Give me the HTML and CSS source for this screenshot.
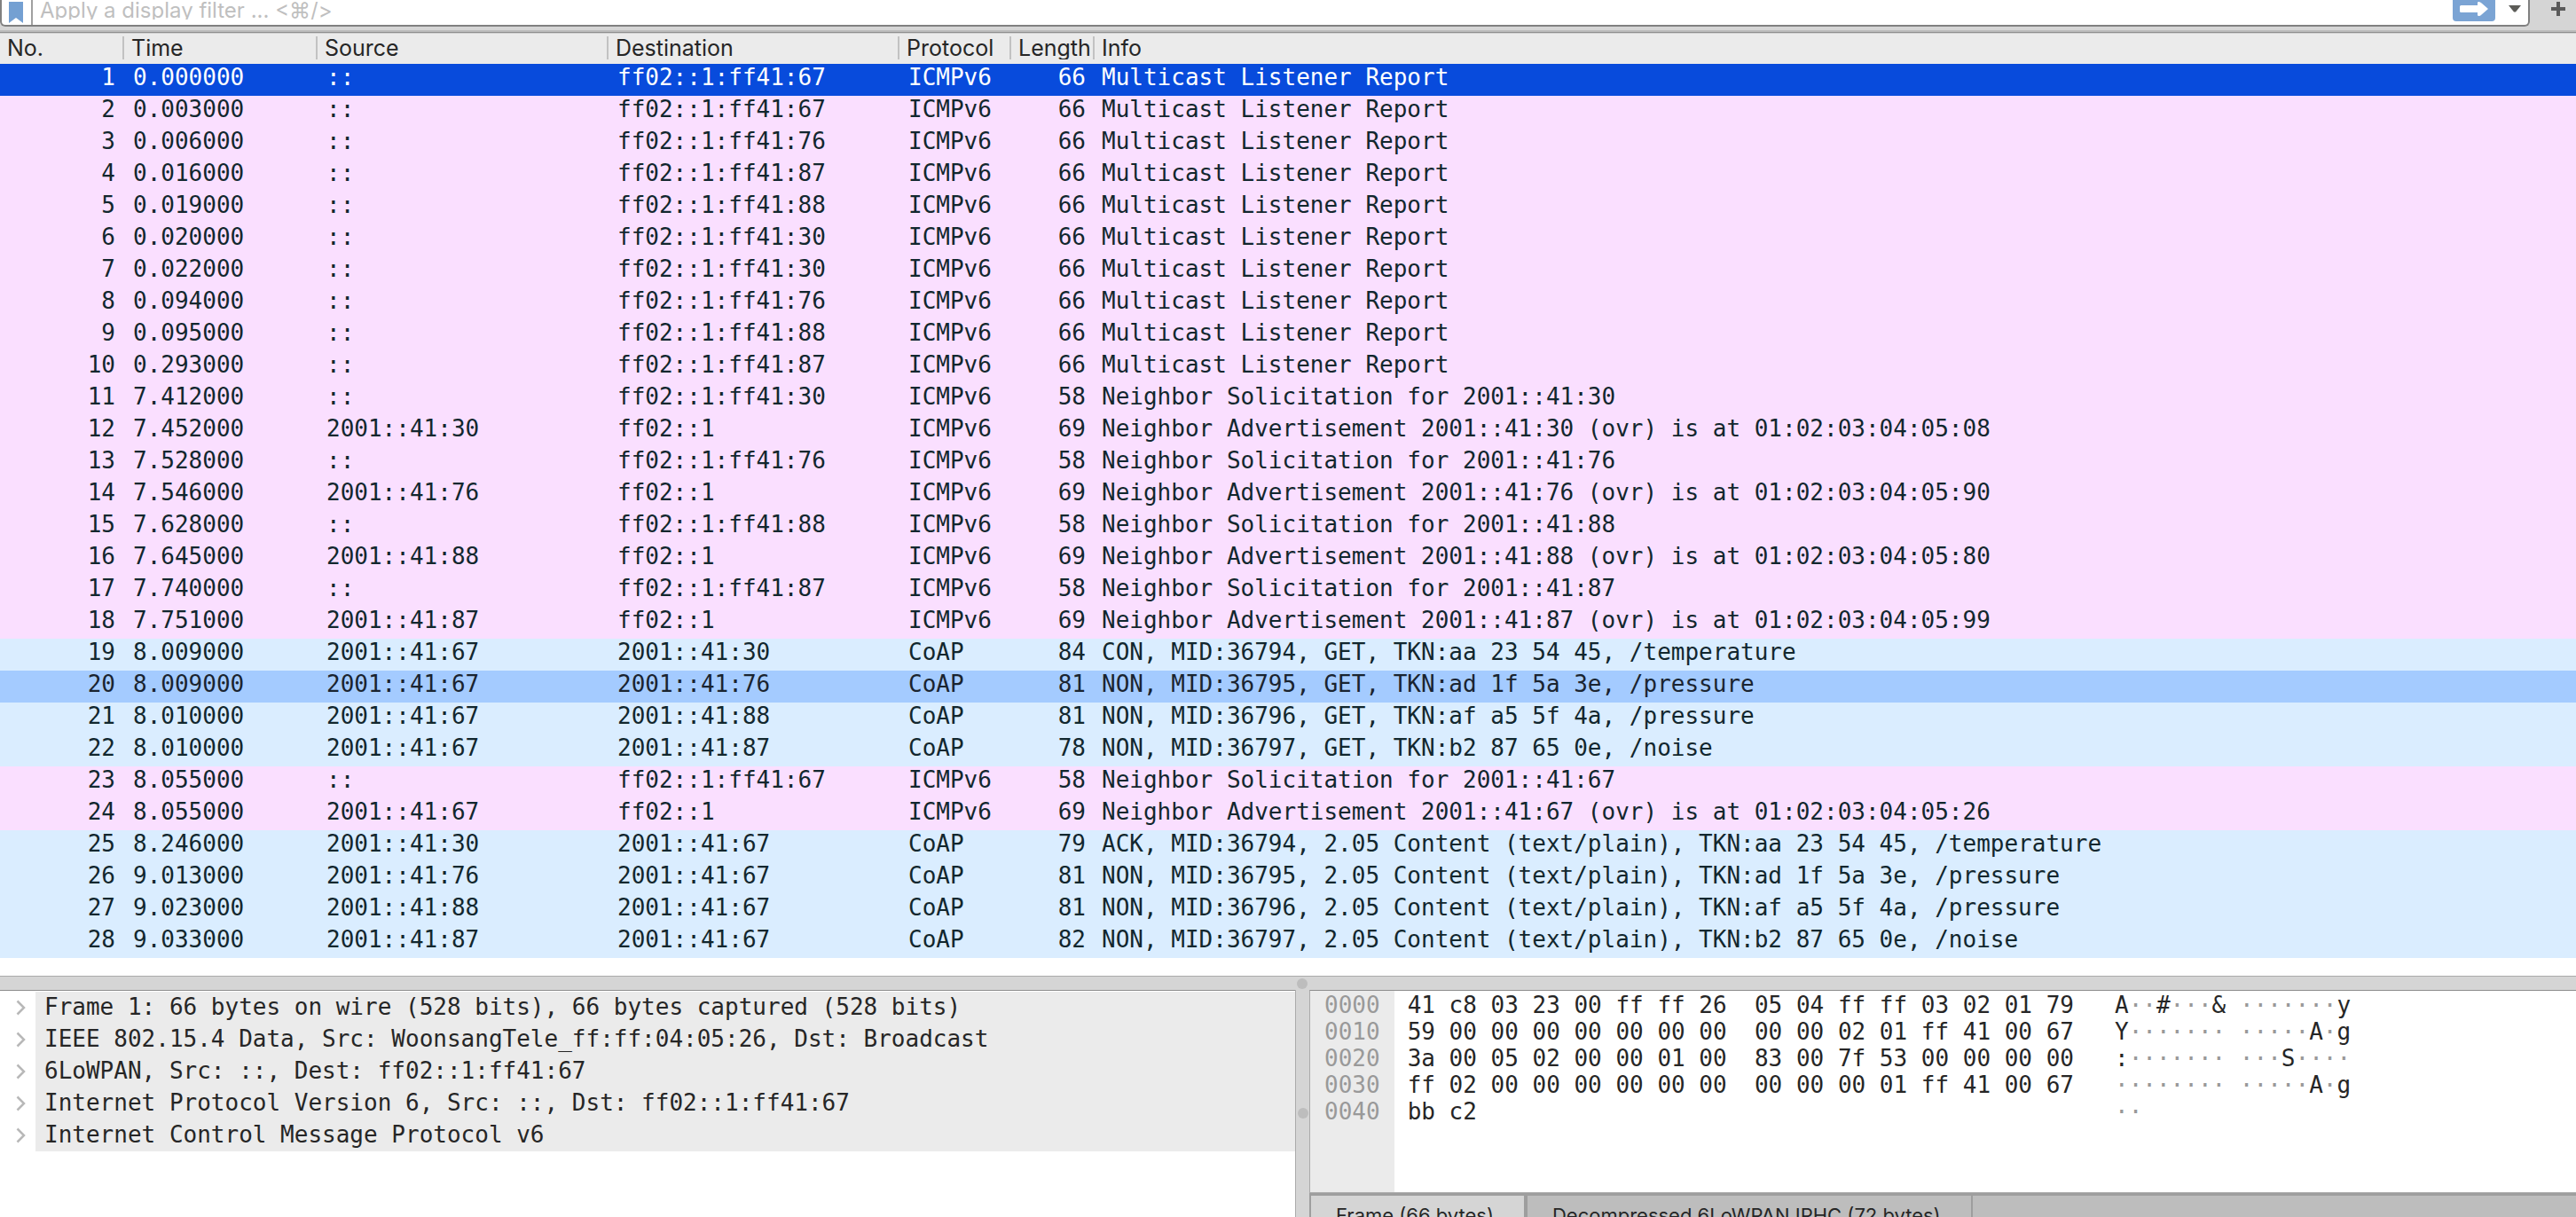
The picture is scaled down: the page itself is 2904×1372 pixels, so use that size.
FILE: index.html
```html
<!DOCTYPE html>
<html lang="en">
<head>
<meta charset="utf-8">
<title>Packet capture</title>
<link rel="stylesheet" href="styles.css">
</head>
<body>
<header class="toolbar">
  <form class="filter">
    <button class="icon-button bookmark" type="button" aria-label="Filter bookmarks"><svg width="16" height="24" viewBox="0 0 16 24"><path d="M0 0H16V24L8 18L0 24Z" fill="#74a0d2"/></svg></button>
    <input class="filter-input" type="text" aria-label="Display filter" placeholder="Apply a display filter ... &lt;⌘/&gt;">
    <button class="icon-button" type="button" aria-label="Apply filter"><svg width="48" height="24" viewBox="0 0 48 24"><path d="M0 0H48V20Q48 24 44 24H4Q0 24 0 20Z" fill="#7ba4d4"/><path d="M9.500 6H28V3Q28 2 29.500 2Q31 2 32.500 3.500L40 10L32.500 16.500Q31 18 29.500 18Q28 18 28 17V14H9.500Q8 14 8 12.500V7.500Q8 6 9.500 6Z" fill="#fff"/></svg></button>
    <button class="icon-button history" type="button" aria-label="Recent filters"><svg width="14" height="24" viewBox="0 0 14 24"><path d="M0 6H14L8 13.500H6Z" fill="#5c5c58"/></svg></button>
  </form>
  <button class="icon-button add" type="button" aria-label="Add filter button"><svg width="16" height="24" viewBox="0 0 16 24"><path d="M6 2H10V8H16V12H10V18H6V12H0V8H6Z" fill="#5a5a5a"/></svg></button>
</header>
<main class="panes">
<section class="packets">
<table class="packet-table">
<colgroup><col class="c-no"><col class="c-time"><col class="c-addr"><col class="c-addr"><col class="c-proto"><col class="c-len"><col></colgroup>
<thead><tr><th><span>No.</span></th><th><span>Time</span></th><th><span>Source</span></th><th><span>Destination</span></th><th><span>Protocol</span></th><th><span class="clip">Length</span></th><th><span>Info</span></th></tr></thead>
<tbody>
<tr class="selected"><td>1</td><td>0.000000</td><td>::</td><td>ff02::1:ff41:67</td><td>ICMPv6</td><td>66</td><td>Multicast Listener Report</td></tr>
<tr><td>2</td><td>0.003000</td><td>::</td><td>ff02::1:ff41:67</td><td>ICMPv6</td><td>66</td><td>Multicast Listener Report</td></tr>
<tr><td>3</td><td>0.006000</td><td>::</td><td>ff02::1:ff41:76</td><td>ICMPv6</td><td>66</td><td>Multicast Listener Report</td></tr>
<tr><td>4</td><td>0.016000</td><td>::</td><td>ff02::1:ff41:87</td><td>ICMPv6</td><td>66</td><td>Multicast Listener Report</td></tr>
<tr><td>5</td><td>0.019000</td><td>::</td><td>ff02::1:ff41:88</td><td>ICMPv6</td><td>66</td><td>Multicast Listener Report</td></tr>
<tr><td>6</td><td>0.020000</td><td>::</td><td>ff02::1:ff41:30</td><td>ICMPv6</td><td>66</td><td>Multicast Listener Report</td></tr>
<tr><td>7</td><td>0.022000</td><td>::</td><td>ff02::1:ff41:30</td><td>ICMPv6</td><td>66</td><td>Multicast Listener Report</td></tr>
<tr><td>8</td><td>0.094000</td><td>::</td><td>ff02::1:ff41:76</td><td>ICMPv6</td><td>66</td><td>Multicast Listener Report</td></tr>
<tr><td>9</td><td>0.095000</td><td>::</td><td>ff02::1:ff41:88</td><td>ICMPv6</td><td>66</td><td>Multicast Listener Report</td></tr>
<tr><td>10</td><td>0.293000</td><td>::</td><td>ff02::1:ff41:87</td><td>ICMPv6</td><td>66</td><td>Multicast Listener Report</td></tr>
<tr><td>11</td><td>7.412000</td><td>::</td><td>ff02::1:ff41:30</td><td>ICMPv6</td><td>58</td><td>Neighbor Solicitation for 2001::41:30</td></tr>
<tr><td>12</td><td>7.452000</td><td>2001::41:30</td><td>ff02::1</td><td>ICMPv6</td><td>69</td><td>Neighbor Advertisement 2001::41:30 (ovr) is at 01:02:03:04:05:08</td></tr>
<tr><td>13</td><td>7.528000</td><td>::</td><td>ff02::1:ff41:76</td><td>ICMPv6</td><td>58</td><td>Neighbor Solicitation for 2001::41:76</td></tr>
<tr><td>14</td><td>7.546000</td><td>2001::41:76</td><td>ff02::1</td><td>ICMPv6</td><td>69</td><td>Neighbor Advertisement 2001::41:76 (ovr) is at 01:02:03:04:05:90</td></tr>
<tr><td>15</td><td>7.628000</td><td>::</td><td>ff02::1:ff41:88</td><td>ICMPv6</td><td>58</td><td>Neighbor Solicitation for 2001::41:88</td></tr>
<tr><td>16</td><td>7.645000</td><td>2001::41:88</td><td>ff02::1</td><td>ICMPv6</td><td>69</td><td>Neighbor Advertisement 2001::41:88 (ovr) is at 01:02:03:04:05:80</td></tr>
<tr><td>17</td><td>7.740000</td><td>::</td><td>ff02::1:ff41:87</td><td>ICMPv6</td><td>58</td><td>Neighbor Solicitation for 2001::41:87</td></tr>
<tr><td>18</td><td>7.751000</td><td>2001::41:87</td><td>ff02::1</td><td>ICMPv6</td><td>69</td><td>Neighbor Advertisement 2001::41:87 (ovr) is at 01:02:03:04:05:99</td></tr>
<tr class="coap"><td>19</td><td>8.009000</td><td>2001::41:67</td><td>2001::41:30</td><td>CoAP</td><td>84</td><td>CON, MID:36794, GET, TKN:aa 23 54 45, /temperature</td></tr>
<tr class="coap hovered"><td>20</td><td>8.009000</td><td>2001::41:67</td><td>2001::41:76</td><td>CoAP</td><td>81</td><td>NON, MID:36795, GET, TKN:ad 1f 5a 3e, /pressure</td></tr>
<tr class="coap"><td>21</td><td>8.010000</td><td>2001::41:67</td><td>2001::41:88</td><td>CoAP</td><td>81</td><td>NON, MID:36796, GET, TKN:af a5 5f 4a, /pressure</td></tr>
<tr class="coap"><td>22</td><td>8.010000</td><td>2001::41:67</td><td>2001::41:87</td><td>CoAP</td><td>78</td><td>NON, MID:36797, GET, TKN:b2 87 65 0e, /noise</td></tr>
<tr><td>23</td><td>8.055000</td><td>::</td><td>ff02::1:ff41:67</td><td>ICMPv6</td><td>58</td><td>Neighbor Solicitation for 2001::41:67</td></tr>
<tr><td>24</td><td>8.055000</td><td>2001::41:67</td><td>ff02::1</td><td>ICMPv6</td><td>69</td><td>Neighbor Advertisement 2001::41:67 (ovr) is at 01:02:03:04:05:26</td></tr>
<tr class="coap"><td>25</td><td>8.246000</td><td>2001::41:30</td><td>2001::41:67</td><td>CoAP</td><td>79</td><td>ACK, MID:36794, 2.05 Content (text/plain), TKN:aa 23 54 45, /temperature</td></tr>
<tr class="coap"><td>26</td><td>9.013000</td><td>2001::41:76</td><td>2001::41:67</td><td>CoAP</td><td>81</td><td>NON, MID:36795, 2.05 Content (text/plain), TKN:ad 1f 5a 3e, /pressure</td></tr>
<tr class="coap"><td>27</td><td>9.023000</td><td>2001::41:88</td><td>2001::41:67</td><td>CoAP</td><td>81</td><td>NON, MID:36796, 2.05 Content (text/plain), TKN:af a5 5f 4a, /pressure</td></tr>
<tr class="coap"><td>28</td><td>9.033000</td><td>2001::41:87</td><td>2001::41:67</td><td>CoAP</td><td>82</td><td>NON, MID:36797, 2.05 Content (text/plain), TKN:b2 87 65 0e, /noise</td></tr>
</tbody>
</table>
</section>
<div class="splitter splitter-h"><span class="grip"></span></div>
<div class="lower">
  <ul class="details">
    <li><button class="expand" type="button" aria-label="Expand"><svg width="12" height="18" viewBox="0 0 12 18"><path d="M1.500 1.500L9 9L1.500 16.500" fill="none" stroke="#b8b8b8" stroke-width="2.500"/></svg></button><span class="layer">Frame 1: 66 bytes on wire (528 bits), 66 bytes captured (528 bits)</span></li>
    <li><button class="expand" type="button" aria-label="Expand"><svg width="12" height="18" viewBox="0 0 12 18"><path d="M1.500 1.500L9 9L1.500 16.500" fill="none" stroke="#b8b8b8" stroke-width="2.500"/></svg></button><span class="layer">IEEE 802.15.4 Data, Src: WoonsangTele_ff:ff:04:05:26, Dst: Broadcast</span></li>
    <li><button class="expand" type="button" aria-label="Expand"><svg width="12" height="18" viewBox="0 0 12 18"><path d="M1.500 1.500L9 9L1.500 16.500" fill="none" stroke="#b8b8b8" stroke-width="2.500"/></svg></button><span class="layer">6LoWPAN, Src: ::, Dest: ff02::1:ff41:67</span></li>
    <li><button class="expand" type="button" aria-label="Expand"><svg width="12" height="18" viewBox="0 0 12 18"><path d="M1.500 1.500L9 9L1.500 16.500" fill="none" stroke="#b8b8b8" stroke-width="2.500"/></svg></button><span class="layer">Internet Protocol Version 6, Src: ::, Dst: ff02::1:ff41:67</span></li>
    <li><button class="expand" type="button" aria-label="Expand"><svg width="12" height="18" viewBox="0 0 12 18"><path d="M1.500 1.500L9 9L1.500 16.500" fill="none" stroke="#b8b8b8" stroke-width="2.500"/></svg></button><span class="layer">Internet Control Message Protocol v6</span></li>
  </ul>
  <div class="splitter splitter-v"><span class="grip"></span></div>
  <section class="bytes">
    <div class="dump">
<pre class="offsets">0000
0010
0020
0030
0040</pre>
<pre class="hex">41 c8 03 23 00 ff ff 26  05 04 ff ff 03 02 01 79
59 00 00 00 00 00 00 00  00 00 02 01 ff 41 00 67
3a 00 05 02 00 00 01 00  83 00 7f 53 00 00 00 00
ff 02 00 00 00 00 00 00  00 00 00 01 ff 41 00 67
bb c2</pre>
<pre class="ascii"><b>A</b>··<b>#</b>···<b>&amp;</b> ·······<b>y</b>
<b>Y</b>······· ·····<b>A</b>·<b>g</b>
<b>:</b>······· ···<b>S</b>····
········ ·····<b>A</b>·<b>g</b>
··</pre>
    </div>
    <div class="tabs" role="tablist">
      <button class="tab active" type="button" role="tab" aria-selected="true">Frame (66 bytes)</button>
      <button class="tab" type="button" role="tab" aria-selected="false">Decompressed 6LoWPAN IPHC (72 bytes)</button>
    </div>
  </section>
</div>
</main>
</body>
</html>
```
FILE: styles.css
```css
* { box-sizing: border-box; }
body {
  margin: 0;
  height: 100vh;
  display: flex;
  flex-direction: column;
  overflow: hidden;
  background: #fff;
  color: #262626;
  font-family: Inter, "DejaVu Sans", sans-serif;
  font-size: 24px;
}
button { margin: 0; padding: 0; border: 0; background: none; font: inherit; color: inherit; }
svg { display: block; }

/* Filter toolbar */
.toolbar {
  flex: none;
  display: flex;
  align-items: flex-start;
  height: 36px;
  padding-right: 12px;
  background: #d5d5d5;
  border-bottom: 2px solid #bdbdbd;
}
.filter {
  flex: 1;
  display: flex;
  align-items: flex-start;
  height: 30px;
  margin: 0;
  background: #fff;
  border: 2px solid #808080;
  border-top: 0;
  border-radius: 0 0 6px 6px;
}
.bookmark { height: 28px; padding: 0 9px 0 8px; border-right: 2px solid #a0a0a0; }
.filter-input {
  flex: 1;
  min-width: 0;
  height: 22px;
  padding: 0 0 0 8px;
  border: 0;
  outline: 0;
  background: none;
  font: inherit;
  line-height: 22px;
}
.filter-input::placeholder { color: #bfbfbf; opacity: 1; }
.history { padding: 0 8px 0 15px; }
.add { margin-left: 24px; }

/* Packet list */
.panes { flex: 1; min-height: 0; display: flex; flex-direction: column; }
.packets { flex: none; padding-bottom: 20px; border-top: 1px solid #8e8e8e; }
.packet-table {
  width: 100%;
  table-layout: fixed;
  border-collapse: separate;
  border-spacing: 0;
  font: 26px/30px "DejaVu Sans Mono", monospace;
  color: #12272e;
}
.c-no { width: 140px; }
.c-time { width: 218px; }
.c-addr { width: 328px; }
.c-proto { width: 126px; }
.c-len { width: 94px; }
th {
  height: 35px;
  padding: 3px 0 5px;
  background: #ebebeb;
  border-top: 1px solid #d0d0d0;
  color: #262626;
  font: 25px/26px Inter, sans-serif;
  text-align: left;
}
th span {
  display: block;
  padding-left: 8px;
  border-right: 2px solid #c2c2c2;
  white-space: nowrap;
}
th .clip { overflow: hidden; }
th:last-child span { border-right: 0; }
td { height: 36px; padding: 0 8px 6px 10px; white-space: nowrap; }
td:nth-child(1), td:nth-child(6) { padding-right: 10px; text-align: right; }
td:last-child { padding-left: 8px; }
tbody tr { background: #fadfff; }
tbody .coap { background: #daedff; }
tbody .hovered { background: #a4cbff; color: #1a2430; }
tbody .selected { background: #084bdc; color: #fff; }

/* Splitters */
.splitter { flex: none; display: flex; align-items: center; justify-content: center; background: #d5d5d5; }
.splitter-h { height: 16px; padding-left: 32px; border-top: 1px solid #ababab; }
.splitter-v { width: 16px; padding-top: 22px; border-left: 1px solid #ababab; }
.grip { width: 12px; height: 12px; border-radius: 50%; background: #bdbdbd; }

/* Packet details */
.lower { flex: 1; min-height: 0; display: flex; }
.details {
  flex: 1460 1 0;
  min-width: 0;
  margin: 0;
  padding: 1px 0 0;
  list-style: none;
  border-top: 1px solid #8e8e8e;
  background: #fff;
  font: 26px/30px "DejaVu Sans Mono", monospace;
}
.details li { display: flex; height: 36px; }
.expand { flex: none; width: 40px; padding-left: 18px; }
.layer { flex: 1; padding: 2px 0 4px 10px; background: #ebebeb; white-space: nowrap; overflow: hidden; }

/* Packet bytes */
.bytes { flex: 1428 1 0; min-width: 0; display: flex; flex-direction: column; }
.dump {
  flex: 1;
  min-height: 0;
  display: flex;
  border: 1px solid #ababab;
  border-top-color: #8e8e8e;
  border-right: 0;
  background: #fff;
}
.dump pre { margin: 0; padding-top: 1px; font: 26px/30px "DejaVu Sans Mono", monospace; }
.dump .offsets { padding-left: 16px; padding-right: 16px; background: #ebebeb; color: #999; }
.dump .hex { padding-left: 15px; }
.dump .ascii { padding-left: 46px; color: #999; }
.ascii b { font-weight: 400; color: #262626; }
.tabs {
  flex: none;
  display: flex;
  height: 27px;
  overflow: hidden;
  background: #bdbdbd;
  border-top: 3px solid #9e9e9e;
  border-left: 2px solid #9e9e9e;
}
.tab { height: 44px; padding: 0 34px 0 28px; border-right: 2px solid #9e9e9e; font-size: 22px; white-space: nowrap; }
.tab.active { background: #d5d5d5; border-right-width: 4px; }
```
